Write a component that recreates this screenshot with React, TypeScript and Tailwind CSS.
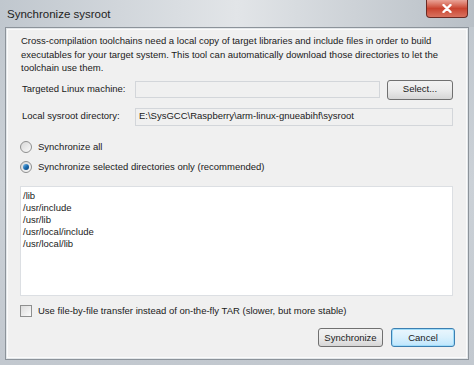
import React, { useState } from "react";

const font = { fontFamily: '"Liberation Sans", Arial, sans-serif' };

const dirs = ["/lib", "/usr/include", "/usr/lib", "/usr/local/include", "/usr/local/lib"];

const Radio: React.FC<{ checked: boolean; label: string; onClick: () => void }> = ({ checked, label, onClick }) => (
  <div className="flex items-center gap-[6px] cursor-default" onClick={onClick}>
    <span className="w-[12px] h-[12px] rounded-full border border-[#8e8f8f] bg-gradient-to-br from-[#d8d8d8] to-[#fafafa] flex items-center justify-center">
      {checked && (
        <span className="w-[6px] h-[6px] rounded-full bg-gradient-to-br from-[#7ec3ee] via-[#1d6fb3] to-[#0c3f74]" />
      )}
    </span>
    <span className="text-[#1a1a1a]">{label}</span>
  </div>
);

const App: React.FC = () => {
  const [mode, setMode] = useState("selected");
  const [fileByFile, setFileByFile] = useState(false);

  return (
    <div
      className="w-[474px] h-[365px] flex flex-col px-[5px] pb-[5px] bg-gradient-to-b from-[#bfc6cd] via-[#cbd1d7] to-[#c2c8cf] text-[9.5px] overflow-hidden"
      style={font}
    >
      {/* title bar */}
      <div className="h-[27px] flex items-start justify-between bg-gradient-to-r from-[#c0c7ce] via-[#e2e5e8] to-[#b8bfc6] -mx-[5px] px-[7px]">
        <span className="mt-[6px] text-[11.5px] text-[#1e1e1e]">Synchronize sysroot</span>
        <button className="w-[42px] h-[18px] -mr-[1px] rounded-b-[4px] border border-t-0 border-[#6b2a23] bg-gradient-to-b from-[#e9a397] via-[#c9432f] to-[#d9725f] flex items-center justify-center">
          <svg width="10" height="9" viewBox="0 0 10 9">
            <path d="M1.5 1 L8.5 8 M8.5 1 L1.5 8" stroke="#ffffff" strokeWidth="2.4" strokeLinecap="round" />
          </svg>
        </button>
      </div>

      {/* client */}
      <div className="flex-1 border border-[#8c939a] p-[1px] bg-[#e3e7ea]">
        <div className="h-full bg-[#f0f0f0] border border-[#fbfbfb] flex flex-col pl-[12px] pr-[13px] pt-[4px] text-[#1a1a1a]">
          <p className="leading-[13.5px] pl-[1px]">
            Cross-compilation toolchains need a local copy of target libraries and include files in order to build
            executables for your target system. This tool can automatically download those directories to let the
            toolchain use them.
          </p>

          <div className="mt-[5px] pl-[2px] flex items-center">
            <span className="w-[113px]">Targeted Linux machine:</span>
            <div className="w-[245px] h-[17px] border border-[#d3d6da] bg-[#f0f0f0]" />
            <button className="ml-auto w-[66px] h-[20px] rounded-[3px] border border-[#707070] bg-gradient-to-b from-[#f2f2f2] via-[#ebebeb] to-[#d6d6d6] text-[#1a1a1a]">
              Select...
            </button>
          </div>

          <div className="mt-[8px] pl-[2px] flex items-center">
            <span className="w-[113px]">Local sysroot directory:</span>
            <div className="flex-1 h-[18px] border border-[#d3d6da] bg-[#f0f0f0] flex items-center px-[3px]">
              E:\SysGCC\Raspberry\arm-linux-gnueabihf\sysroot
            </div>
          </div>

          <div className="mt-[14px] flex flex-col gap-[6px]">
            <Radio checked={mode === "all"} label="Synchronize all" onClick={() => setMode("all")} />
            <Radio
              checked={mode === "selected"}
              label="Synchronize selected directories only (recommended)"
              onClick={() => setMode("selected")}
            />
          </div>

          <div className="mt-[12px] h-[110px] bg-white border border-[#dcdfe3] pt-[3px] px-[2px] leading-[12px]">
            {dirs.map((d) => (
              <div key={d}>{d}</div>
            ))}
          </div>

          <div className="mt-[8px] flex items-center gap-[6px] cursor-default" onClick={() => setFileByFile(!fileByFile)}>
            <span className="w-[12px] h-[12px] border border-[#8e8f8f] bg-gradient-to-br from-[#dcdcdc] to-[#fbfbfb] flex items-center justify-center text-[9px]">
              {fileByFile ? "✓" : ""}
            </span>
            <span>Use file-by-file transfer instead of on-the-fly TAR (slower, but more stable)</span>
          </div>

          <div className="mt-[10px] flex justify-end gap-[8px] -mr-[2px]">
            <button className="w-[65px] h-[19px] rounded-[3px] border border-[#707070] bg-gradient-to-b from-[#f2f2f2] via-[#ebebeb] to-[#d6d6d6]">
              Synchronize
            </button>
            <button className="w-[64px] h-[19px] rounded-[3px] border border-[#3c7fb1] bg-gradient-to-b from-[#eaf6fd] via-[#d9f0fc] to-[#bee6fd] shadow-[inset_0_0_0_1px_#9fdcf9]">
              Cancel
            </button>
          </div>
        </div>
      </div>
    </div>
  );
};

export default App;
